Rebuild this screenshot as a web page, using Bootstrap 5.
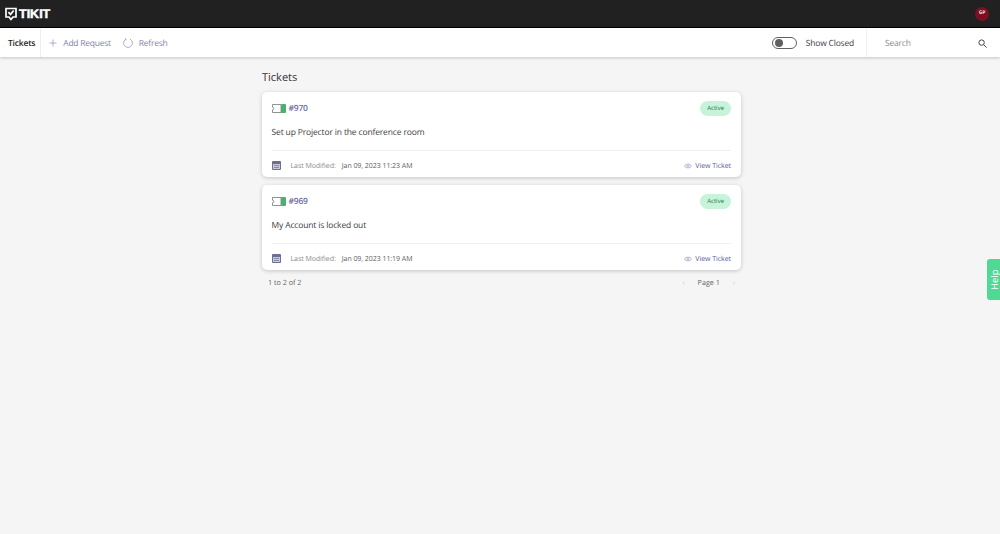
<!DOCTYPE html>
<html lang="en">
<head>
<meta charset="UTF-8">
<title>Tickets</title>
<link href="https://cdn.jsdelivr.net/npm/bootstrap@5.3.3/dist/css/bootstrap.min.css" rel="stylesheet">
<style>
body { background: #f5f5f5; font-family: "Open Sans", "Noto Sans", sans-serif; font-size: 8.5px; letter-spacing: -.2px; color: #424242; height: 534px; overflow: hidden; text-rendering: geometricPrecision; }
.top-bar { height: 28px; background: #212121; border-bottom: 1px solid #000; padding: 1px 11px 0 5px; }
.logo-text { font-family: "Liberation Sans", sans-serif; font-weight: 700; font-size: 12.5px; letter-spacing: 0; color: #fff; line-height: 1; -webkit-text-stroke: .5px #fff; }
.logo-wrap { gap: 2px; }
.user-dot { width: 14px; height: 14px; border-radius: 50%; background: #7a1022; color: #f3d8dc; font-size: 5px; font-weight: 700; }
.tool-bar { height: 29px; background: #fff; box-shadow: 0 1px 3px rgba(0,0,0,.2); padding-top: 1px; }
.tool-current { font-weight: 600; color: #242424; padding: 2px 5px 0 8px; height: 28px; border-right: 1px solid #eee; }
.tool-link { color: #6b6d9e; opacity: .85; letter-spacing: -.25px; }
.tool-link span, .closed-label, .search-box span { padding-top: 2px; }
.add-link { margin-left: 8px; gap: 6px; }
.refresh-link { margin-left: 12px; gap: 6px; }
.closed-toggle { width: 25px; height: 12px; border: 1px solid #616161; border-radius: 6px; padding: 0 2px; background: #fff; }
.closed-toggle i { display: block; width: 8px; height: 8px; border-radius: 50%; background: #616161; }
.closed-label { color: #424242; margin: 0 12px 0 9px; }
.search-box { width: 134px; height: 28px; border-left: 1px solid #f0f0f0; padding: 0 13px 0 18px; color: #8a8a8a; }
.page-wrap { width: 479px; margin-left: 262px; }
.page-title { font-size: 11px; font-weight: 400; letter-spacing: 0; color: #333; margin: 14px 0 7px; line-height: 14px; }
.ticket-box { height: 85px; background: #fff; border-radius: 5px; box-shadow: 0 1px 4px rgba(0,0,0,.2); padding: 9px 10px 0 9.5px; margin-bottom: 8px; }
.ticket-no { color: #6b6d9e; font-weight: 600; font-size: 8.5px; margin-left: 3px; padding-top: 2px; }
.status-pill { background: #c6f3da; color: #1c7a4a; font-size: 6px; letter-spacing: 0; border-radius: 8px; padding: 0 7px; height: 15px; line-height: 15px; }
.ticket-head { height: 15px; margin-bottom: 11px; }
.ticket-title { color: #3d3d3d; font-size: 8.5px; font-weight: 500; letter-spacing: -.15px; line-height: 12px; height: 12px; margin-bottom: 11px; }
.ticket-foot { border-top: 1px solid #f0f0f0; height: 27px; padding-top: 3px; font-size: 7px; letter-spacing: -.05px; color: #616161; }
.ticket-foot span { padding-top: 4px; }
.mod-label { color: #8a8a8a; margin: 0 6px 0 10px; }
.view-link { color: #5b5d98; gap: 3px; }
.pager-row { padding: 0 6px; height: 12px; margin-top: -1px; font-size: 7.2px; letter-spacing: 0; color: #616161; }
.pager-arrow { color: #ccc; }
.page-num { margin: 0 13px; }
.help-tab { position: absolute; right: 0; top: 259px; width: 13px; height: 41px; background: #4fd992; color: #fff; border-radius: 3px 0 0 3px; font-size: 9.5px; letter-spacing: 0; padding-left: 2px; }
.help-tab span { transform: rotate(-90deg); display: block; line-height: 1; }
</style>
</head>
<body>

<div class="top-bar d-flex align-items-center justify-content-between">
  <div class="logo-wrap d-flex align-items-center">
    <svg width="12" height="14" viewBox="0 0 12 14" fill="none" stroke="#fff" stroke-width="1.7">
      <path d="M1 1.5h10v8.5H8L6 12.5 4 10H1z"/>
      <path d="M3.4 5.2l2.1 2.2 3.2-3.9"/>
    </svg>
    <span class="logo-text">TIKIT</span>
  </div>
  <div class="user-dot d-flex align-items-center justify-content-center">GP</div>
</div>

<div class="tool-bar d-flex align-items-center justify-content-between">
  <div class="d-flex align-items-center">
    <div class="tool-current d-flex align-items-center">Tickets</div>
    <div class="tool-link add-link d-flex align-items-center">
      <svg width="8" height="8" viewBox="0 0 8 8" stroke="#8a8cc0" stroke-width=".8"><path d="M4 .5v7M.5 4h7"/></svg>
      <span>Add Request</span>
    </div>
    <div class="tool-link refresh-link d-flex align-items-center">
      <svg width="10" height="10" viewBox="0 0 10 10" fill="none" stroke="#8a8cc0" stroke-width=".8"><path d="M3 1.1A4.4 4.4 0 1 0 7 1.1M1.8 .8L3 1.1 2.8 2.4"/></svg>
      <span>Refresh</span>
    </div>
  </div>
  <div class="d-flex align-items-center">
    <div class="closed-toggle d-flex align-items-center"><i></i></div>
    <div class="closed-label">Show Closed</div>
    <div class="search-box d-flex align-items-center justify-content-between">
      <span>Search</span>
      <svg width="9" height="9" viewBox="0 0 10 10" fill="none" stroke="#424242" stroke-width="1.1"><circle cx="4" cy="4" r="3"/><path d="M6.2 6.2L9.5 9.5"/></svg>
    </div>
  </div>
</div>

<div class="page-wrap">
  <div class="page-title">Tickets</div>

  <div class="ticket-box">
    <div class="ticket-head d-flex align-items-center justify-content-between">
      <div class="d-flex align-items-center">
        <svg width="14" height="9" viewBox="0 0 14 9"><path d="M.5.5h8.5v8h-8.5V5.8a1.3 1.3 0 0 0 0-2.6z" fill="none" stroke="#757575" stroke-width=".8"/><rect x="9" y="0" width="5" height="9" rx="1" fill="#4caf6e"/></svg>
        <span class="ticket-no">#970</span>
      </div>
      <div class="status-pill">Active</div>
    </div>
    <div class="ticket-title">Set up Projector in the conference room</div>
    <div class="ticket-foot d-flex align-items-center justify-content-between">
      <div class="d-flex align-items-center">
        <svg width="9" height="9" viewBox="0 0 9 9"><rect width="9" height="9" rx="1" fill="#6d6e93"/><rect x="1" y="3" width="7" height="5" fill="#c9c9da"/><path d="M2 4.5h5M2 6.5h5" stroke="#6d6e93" stroke-width=".7"/></svg>
        <span class="mod-label">Last Modified:</span>
        <span>Jan 09, 2023 11:23 AM</span>
      </div>
      <div class="view-link d-flex align-items-center">
        <svg width="8" height="6" viewBox="0 0 8 6" fill="none" stroke="#9a9cc4" stroke-width=".7"><path d="M.4 3C2 .5 6 .5 7.6 3 6 5.5 2 5.5 .4 3z"/><circle cx="4" cy="3" r="1"/></svg>
        <span>View Ticket</span>
      </div>
    </div>
  </div>

  <div class="ticket-box">
    <div class="ticket-head d-flex align-items-center justify-content-between">
      <div class="d-flex align-items-center">
        <svg width="14" height="9" viewBox="0 0 14 9"><path d="M.5.5h8.5v8h-8.5V5.8a1.3 1.3 0 0 0 0-2.6z" fill="none" stroke="#757575" stroke-width=".8"/><rect x="9" y="0" width="5" height="9" rx="1" fill="#4caf6e"/></svg>
        <span class="ticket-no">#969</span>
      </div>
      <div class="status-pill">Active</div>
    </div>
    <div class="ticket-title">My Account is locked out</div>
    <div class="ticket-foot d-flex align-items-center justify-content-between">
      <div class="d-flex align-items-center">
        <svg width="9" height="9" viewBox="0 0 9 9"><rect width="9" height="9" rx="1" fill="#6d6e93"/><rect x="1" y="3" width="7" height="5" fill="#c9c9da"/><path d="M2 4.5h5M2 6.5h5" stroke="#6d6e93" stroke-width=".7"/></svg>
        <span class="mod-label">Last Modified:</span>
        <span>Jan 09, 2023 11:19 AM</span>
      </div>
      <div class="view-link d-flex align-items-center">
        <svg width="8" height="6" viewBox="0 0 8 6" fill="none" stroke="#9a9cc4" stroke-width=".7"><path d="M.4 3C2 .5 6 .5 7.6 3 6 5.5 2 5.5 .4 3z"/><circle cx="4" cy="3" r="1"/></svg>
        <span>View Ticket</span>
      </div>
    </div>
  </div>

  <div class="pager-row d-flex align-items-center justify-content-between">
    <span>1 to 2 of 2</span>
    <div class="d-flex align-items-center">
      <span class="pager-arrow">‹</span>
      <span class="page-num">Page 1</span>
      <span class="pager-arrow">›</span>
    </div>
  </div>
</div>

<div class="help-tab d-flex align-items-center justify-content-center"><span>Help</span></div>

<script src="https://cdn.jsdelivr.net/npm/bootstrap@5.3.3/dist/js/bootstrap.bundle.min.js"></script>
</body>
</html>
